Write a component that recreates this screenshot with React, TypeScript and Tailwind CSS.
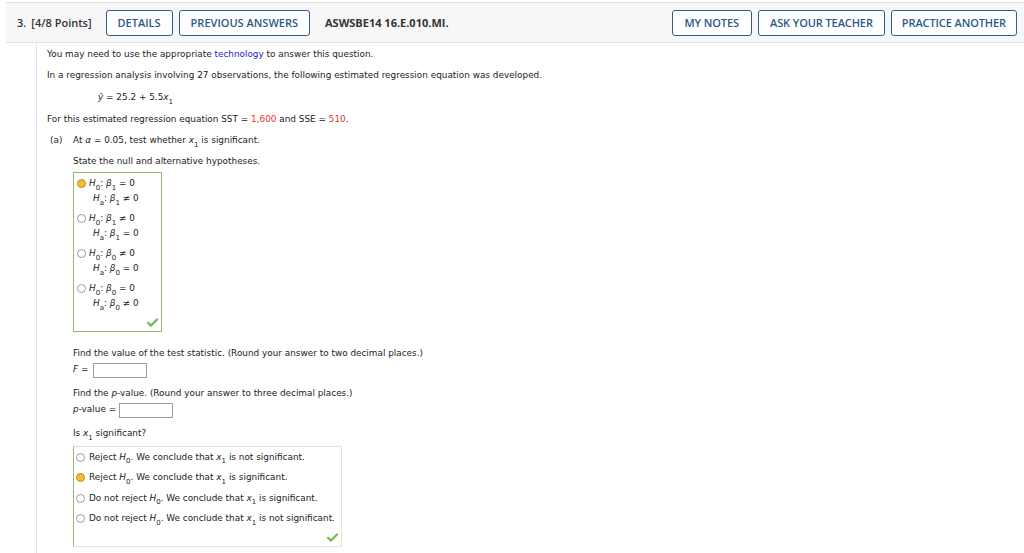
import React from "react"

const body = "font-['DejaVu_Sans',Verdana,sans-serif] text-[8.9px] text-[#222]"

function Sub({ children }: { children: React.ReactNode }) {
  return <sub className="text-[7px] not-italic relative top-[1px] align-sub">{children}</sub>
}

function I({ children }: { children: React.ReactNode }) {
  return <span className="italic">{children}</span>
}

function Radio({ on = false }: { on?: boolean }) {
  return on ? (
    <span className="inline-block w-[9px] h-[9px] rounded-full bg-[#f4bd38] border border-[#c38c1c] shrink-0" />
  ) : (
    <span className="inline-block w-[9px] h-[9px] rounded-full bg-white border border-[#9a9a9a] shrink-0" />
  )
}

function Check() {
  return (
    <svg width="11" height="9" viewBox="0 0 11 9">
      <path d="M1 4.8 L4 7.6 L10 1.4" fill="none" stroke="#6cb851" strokeWidth="2.2" strokeLinecap="round" strokeLinejoin="round" />
    </svg>
  )
}

function HeaderButton({ label, px = "px-[11px]" }: { label: string; px?: string }) {
  return (
    <div className={`h-[26px] ${px} flex items-center border border-[#2e5f8e] rounded-[3px] text-[#2b5a88] bg-white`}>
      {label}
    </div>
  )
}

type Hyp = { h0: React.ReactNode; ha: React.ReactNode; on?: boolean }

const b1 = <I>β<Sub>1</Sub></I>
const b0 = <I>β<Sub>0</Sub></I>

const hyps: Hyp[] = [
  { h0: <>{b1} = 0</>, ha: <>{b1} ≠ 0</>, on: true },
  { h0: <>{b1} ≠ 0</>, ha: <>{b1} = 0</> },
  { h0: <>{b0} ≠ 0</>, ha: <>{b0} = 0</> },
  { h0: <>{b0} = 0</>, ha: <>{b0} ≠ 0</> },
]

const H0 = <I>H<Sub>0</Sub></I>
const x1 = <I>x<Sub>1</Sub></I>

const conclusions: { text: React.ReactNode; on?: boolean }[] = [
  { text: <>Reject {H0}. We conclude that {x1} is not significant.</> },
  { text: <>Reject {H0}. We conclude that {x1} is significant.</>, on: true },
  { text: <>Do not reject {H0}. We conclude that {x1} is significant.</> },
  { text: <>Do not reject {H0}. We conclude that {x1} is not significant.</> },
]

export default function App() {
  return (
    <div className="w-[1024px] h-[553px] overflow-hidden bg-white">
      {/* Question header */}
      <div className="mt-[2px] ml-[6px] h-[41px] bg-[#f7f7f7] border-y border-[#e1e1e1] flex items-center pl-[11px] pr-[7px] pt-[1px] font-['Open_Sans',sans-serif] font-semibold text-[11px] text-[#333]">
        <span>3.</span>
        <span className="ml-[5px]">[4/8 Points]</span>
        <div className="ml-[14px] flex gap-[6px]">
          <HeaderButton label="DETAILS" />
          <HeaderButton label="PREVIOUS ANSWERS" />
        </div>
        <span className="ml-[15px] font-bold">ASWSBE14 16.E.010.MI.</span>
        <div className="ml-auto flex gap-[6px] tracking-[-0.1px]">
          <HeaderButton label="MY NOTES" px="px-[12px]" />
          <HeaderButton label="ASK YOUR TEACHER" />
          <HeaderButton label="PRACTICE ANOTHER" px="px-[10px]" />
        </div>
      </div>

      {/* Question body */}
      <div className={`ml-[36px] h-[510px] border-l border-[#e3e3e3] pl-[10px] pt-[1px] ${body}`}>
        <p className="leading-[20px]">
          You may need to use the appropriate <span className="text-[#2323c9]">technology</span> to answer this question.
        </p>
        <p className="leading-[22px]">
          In a regression analysis involving 27 observations, the following estimated regression equation was developed.
        </p>
        <p className="leading-[22px] pl-[51px]">
          <I>ŷ</I> = 25.2 + 5.5{x1}
        </p>
        <p className="leading-[22px]">
          For this estimated regression equation SST = <span className="text-[#e5352b]">1,600</span> and SSE ={" "}
          <span className="text-[#e5352b]">510</span>.
        </p>
        <div className="leading-[20px] flex pl-[3px]">
          <span className="w-[23px]">(a)</span>
          <span>
            At <I>α</I> = 0.05, test whether {x1} is significant.
          </span>
        </div>

        <div className="pl-[26px]">
          <p className="leading-[22px]">State the null and alternative hypotheses.</p>

          <div className="w-[89px] h-[160px] border border-[#8fbd6c] pt-[3px] flex flex-col">
            <div className="flex flex-col gap-[5px]">
              {hyps.map((h, i) => (
                <div key={i} className="flex flex-col">
                  <div className="h-[15px] flex items-center pl-[3px]">
                    <Radio on={h.on} />
                    <span className="ml-[3px]">
                      {H0}: {h.h0}
                    </span>
                  </div>
                  <div className="h-[15px] flex items-center pl-[19px]">
                    <I>H<Sub>a</Sub></I>
                    <span>: {h.ha}</span>
                  </div>
                </div>
              ))}
            </div>
            <div className="mt-auto mb-[4px] mr-[3px] flex justify-end">
              <Check />
            </div>
          </div>

          <p className="mt-[13px] h-[16px] leading-[16px]">
            Find the value of the test statistic. (Round your answer to two decimal places.)
          </p>
          <div className="mt-[1px] h-[16px] flex items-center">
            <span>
              <I>F</I> =
            </span>
            <span className="ml-[5px] w-[54px] h-[15px] border border-[#9c9c9c] bg-white" />
          </div>

          <p className="mt-[7px] h-[16px] leading-[16px]">
            Find the <I>p</I>-value. (Round your answer to three decimal places.)
          </p>
          <div className="mt-[1px] h-[16px] flex items-center">
            <span>
              <I>p</I>-value =
            </span>
            <span className="ml-[3px] w-[54px] h-[15px] border border-[#9c9c9c] bg-white" />
          </div>

          <p className="mt-[7px] h-[16px] leading-[16px]">Is {x1} significant?</p>

          <div className="mt-[5px] w-[269px] h-[101px] border border-[#dfe7d8] border-l-[#8fbd6c] flex flex-col">
            {conclusions.map((c, i) => (
              <div key={i} className="h-[20.5px] flex items-center pl-[2px]">
                <Radio on={c.on} />
                <span className="ml-[4px]">{c.text}</span>
              </div>
            ))}
            <div className="mt-auto mb-[4px] mr-[3px] flex justify-end">
              <Check />
            </div>
          </div>
        </div>
      </div>
    </div>
  )
}
